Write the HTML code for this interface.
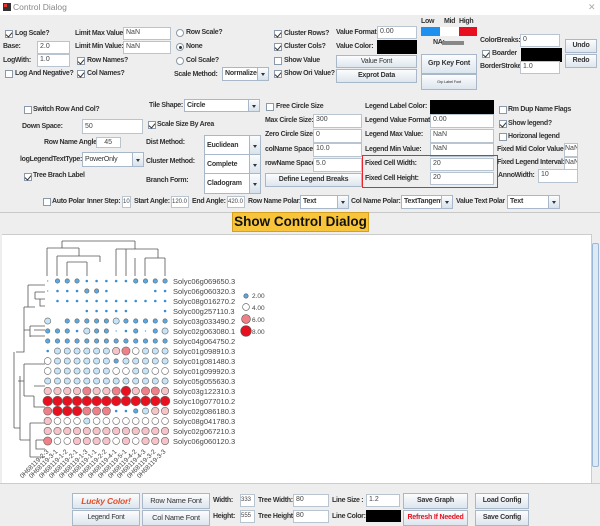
<!DOCTYPE html>
<html><head><meta charset="utf-8"><style>
*{box-sizing:border-box;margin:0;padding:0}
body{width:600px;height:519px;overflow:hidden;background:#eeeeee;font-family:"Liberation Sans",Arial,sans-serif;position:relative;font-size:8px;color:#333}
div,span{position:absolute}
.l{font-weight:bold;font-size:7px;letter-spacing:-0.3px;white-space:nowrap;line-height:10px}
.i{background:#fff;border:1px solid #b8c4d0;font-size:7px;line-height:10px;padding-left:2px;white-space:nowrap;overflow:hidden;color:#444}
.cb{width:8px;height:8px;border:1px solid #8a9aaa;background:#fff}
.cb.c::after{content:"";position:absolute;left:1px;top:0px;width:3px;height:5px;border:solid #333;border-width:0 1.5px 1.5px 0;transform:rotate(40deg)}
.rd{width:8px;height:8px;border:1px solid #8a9aaa;border-radius:50%;background:#fff}
.rd.c::after{content:"";position:absolute;left:1.5px;top:1.5px;width:3px;height:3px;border-radius:50%;background:#333}
.b{background:linear-gradient(#fbfcfd,#dde6ee);border:1px solid #a8b8c8;font-size:7px;font-weight:bold;text-align:center;white-space:nowrap;color:#333;letter-spacing:-0.2px}
.cmb{background:#fff;border:1px solid #a8b8c8;font-size:7px;font-weight:bold;padding-left:2px;white-space:nowrap;color:#333;overflow:hidden;letter-spacing:-0.2px}
.cmb::after{content:"";position:absolute;right:0;top:0;bottom:0;width:10px;border-left:1px solid #a8b8c8;background:linear-gradient(#fbfcfd,#d8e2ec)}
.cmb i{position:absolute;right:3px;top:50%;margin-top:-1px;border:2px solid transparent;border-top:3px solid #333;z-index:2}
.k{background:#000}
</style></head><body>
<div style="left:0;top:0;width:600px;height:15px;background:#fff"></div>
<div style="left:3px;top:3px;width:8px;height:8px;background:#333"></div>
<div style="left:4px;top:4px;width:3px;height:3px;background:#e33"></div>
<div style="left:13px;top:2px;font-size:8.5px;color:#888">Control Dialog</div>
<div style="top:2px;font-size:9px;color:#aaa;left:588px">✕</div>

<div class="cb c" style="left:5px;top:30px"></div><div class="l" style="left:15px;top:29px">Log Scale?</div>
<div class="l" style="left:75px;top:29px">Limit Max Value:</div><div class="i" style="left:123px;top:27px;width:48px;height:13px">NaN</div>
<div class="rd" style="left:176px;top:29px"></div><div class="l" style="left:186px;top:28px">Row Scale?</div>
<div class="cb c" style="left:274px;top:30px"></div><div class="l" style="left:284px;top:29px">Cluster Rows?</div>
<div class="l" style="left:336px;top:28px">Value Format:</div><div class="i" style="left:377px;top:26px;width:40px;height:13px">0.00</div>
<div class="l" style="left:421px;top:17px">Low</div><div class="l" style="left:444px;top:17px">Mid</div><div class="l" style="left:459px;top:17px">High</div>
<div style="left:421px;top:27px;width:19px;height:9px;background:#1e90f0"></div><div style="left:440px;top:27px;width:19px;height:9px;background:#fff"></div><div style="left:459px;top:27px;width:18px;height:9px;background:#e8101e"></div>

<div class="l" style="left:3px;top:42px">Base:</div><div class="i" style="left:37px;top:41px;width:33px;height:13px">2.0</div>
<div class="l" style="left:75px;top:42px">Limit Min Value:</div><div class="i" style="left:123px;top:41px;width:48px;height:13px">NaN</div>
<div class="rd c" style="left:176px;top:43px"></div><div class="l" style="left:186px;top:42px">None</div>
<div class="cb c" style="left:274px;top:43px"></div><div class="l" style="left:284px;top:42px">Cluster Cols?</div>
<div class="l" style="left:336px;top:42px">Value Color:</div><div class="k" style="left:377px;top:40px;width:40px;height:14px"></div>
<div class="l" style="left:433px;top:38px">NA:</div><div style="left:442px;top:41px;width:22px;height:4px;background:#888"></div>
<div class="l" style="left:480px;top:36px">ColorBreaks:</div><div class="i" style="left:520px;top:34px;width:40px;height:13px">0</div>
<div class="b" style="left:565px;top:39px;width:32px;height:14px;line-height:12px">Undo</div>

<div class="l" style="left:3px;top:56px">LogWith:</div><div class="i" style="left:37px;top:54px;width:33px;height:13px">1.0</div>
<div class="cb c" style="left:77px;top:57px"></div><div class="l" style="left:87px;top:56px">Row Names?</div>
<div class="rd" style="left:176px;top:57px"></div><div class="l" style="left:186px;top:56px">Col Scale?</div>
<div class="cb" style="left:274px;top:57px"></div><div class="l" style="left:284px;top:56px">Show Value</div>
<div class="b" style="left:336px;top:55px;width:81px;height:13px;line-height:11px;font-weight:normal">Value Font</div>
<div class="b" style="left:421px;top:54px;width:56px;height:20px;line-height:18px">Grp Key Font</div>
<div class="cb c" style="left:482px;top:50px"></div><div class="l" style="left:492px;top:49px">Boarder</div>
<div class="k" style="left:521px;top:48px;width:41px;height:14px"></div>
<div class="b" style="left:565px;top:54px;width:32px;height:14px;line-height:12px">Redo</div>

<div class="cb" style="left:5px;top:70px"></div><div class="l" style="left:15px;top:69px">Log And Negative?</div>
<div class="cb c" style="left:77px;top:70px"></div><div class="l" style="left:87px;top:69px">Col Names?</div>
<div class="l" style="left:174px;top:70px">Scale Method:</div><div class="cmb" style="left:222px;top:67px;width:47px;height:14px;line-height:12px">Normalized<i></i></div>
<div class="cb c" style="left:274px;top:70px"></div><div class="l" style="left:284px;top:69px">Show Ori Value?</div>
<div class="b" style="left:336px;top:69px;width:81px;height:14px;line-height:12px">Exprot Data</div>
<div class="l" style="left:480px;top:62px">BorderStroke:</div><div class="i" style="left:520px;top:61px;width:40px;height:13px">1.0</div>
<div class="b" style="left:421px;top:74px;width:56px;height:16px;line-height:14px;font-size:4px;font-weight:normal">Grp Label Font</div>

<div class="cb" style="left:24px;top:106px"></div><div class="l" style="left:33px;top:105px">Switch Row And Col?</div>
<div class="l" style="left:149px;top:101px">Tile Shape:</div><div class="cmb" style="left:184px;top:99px;width:76px;height:13px;line-height:11px">Circle<i></i></div>
<div class="cb" style="left:266px;top:103px"></div><div class="l" style="left:276px;top:102px">Free Circle Size</div>
<div class="l" style="left:22px;top:122px">Down Space:</div><div class="i" style="left:82px;top:119px;width:61px;height:15px;line-height:13px">50</div>
<div class="cb c" style="left:148px;top:121px"></div><div class="l" style="left:157px;top:120px">Scale Size By Area</div>
<div class="l" style="left:44px;top:138px">Row Name Angle:</div><div class="i" style="left:96px;top:137px;width:25px;height:11px;line-height:9px;text-align:right;padding-right:8px">45</div>
<div class="l" style="left:146px;top:138px">Dist Method:</div><div class="cmb" style="left:204px;top:135px;width:57px;height:21px;line-height:19px">Euclidean<i></i></div>
<div class="l" style="left:20px;top:155px">logLegendTextType:</div><div class="cmb" style="left:82px;top:152px;width:62px;height:15px;line-height:13px;font-weight:normal">PowerOnly<i></i></div>
<div class="l" style="left:146px;top:157px">Cluster Method:</div><div class="cmb" style="left:204px;top:154px;width:57px;height:21px;line-height:19px">Complete<i></i></div>
<div class="cb c" style="left:24px;top:173px"></div><div class="l" style="left:33px;top:171px">Tree Brach Label</div>
<div class="l" style="left:146px;top:176px">Branch Form:</div><div class="cmb" style="left:204px;top:173px;width:57px;height:21px;line-height:19px">Cladogram<i></i></div>

<div class="l" style="left:265px;top:116px">Max Circle Size:</div><div class="i" style="left:313px;top:114px;width:49px;height:14px">300</div>
<div class="l" style="left:265px;top:130px">Zero Circle Size:</div><div class="i" style="left:313px;top:129px;width:49px;height:14px">0</div>
<div class="l" style="left:265px;top:145px">colName Space:</div><div class="i" style="left:313px;top:143px;width:49px;height:14px">10.0</div>
<div class="l" style="left:265px;top:159px">rowName Space:</div><div class="i" style="left:313px;top:158px;width:49px;height:14px">5.0</div>
<div class="b" style="left:265px;top:173px;width:97px;height:14px;line-height:12px">Define Legend Breaks</div>

<div class="l" style="left:365px;top:102px">Legend Label Color:</div><div class="k" style="left:430px;top:100px;width:64px;height:14px"></div>
<div class="l" style="left:365px;top:116px">Legend Value Format:</div><div class="i" style="left:430px;top:114px;width:64px;height:14px">0.00</div>
<div class="l" style="left:365px;top:130px">Legend Max Value:</div><div class="i" style="left:430px;top:129px;width:64px;height:14px">NaN</div>
<div class="l" style="left:365px;top:145px">Legend Min Value:</div><div class="i" style="left:430px;top:143px;width:64px;height:14px">NaN</div>
<div class="l" style="left:365px;top:159px">Fixed Cell Width:</div><div class="i" style="left:430px;top:158px;width:64px;height:13px">20</div>
<div class="l" style="left:365px;top:174px">Fixed Cell Height:</div><div class="i" style="left:430px;top:172px;width:64px;height:13px">20</div>
<div style="left:362px;top:155px;width:136px;height:33px;border:1.5px solid #e8262e"></div>

<div class="cb" style="left:499px;top:106px"></div><div class="l" style="left:508px;top:105px">Rm Dup Name Flags</div>
<div class="cb c" style="left:499px;top:120px"></div><div class="l" style="left:508px;top:119px">Show legend?</div>
<div class="cb" style="left:499px;top:133px"></div><div class="l" style="left:508px;top:132px">Horizonal legend</div>
<div class="l" style="left:497px;top:145px">Fixed Mid Color Value:</div><div class="i" style="left:564px;top:143px;width:14px;height:14px;padding:0">NaN</div>
<div class="l" style="left:497px;top:158px">Fixed Legend Interval:</div><div class="i" style="left:564px;top:157px;width:14px;height:14px;padding:0">NaN</div>
<div class="l" style="left:498px;top:171px">AnnoWidth:</div><div class="i" style="left:538px;top:169px;width:40px;height:14px">10</div>

<div class="cb" style="left:43px;top:198px"></div><div class="l" style="left:52px;top:197px">Auto Polar</div>
<div class="l" style="left:87px;top:197px">Inner Step:</div><div class="i" style="left:122px;top:196px;width:9px;height:12px;padding:0;font-size:6px">10</div>
<div class="l" style="left:134px;top:197px">Start Angle:</div><div class="i" style="left:171px;top:196px;width:18px;height:12px;padding:0;font-size:6px">120.0</div>
<div class="l" style="left:192px;top:197px">End Angle:</div><div class="i" style="left:227px;top:196px;width:18px;height:12px;padding:0;font-size:6px">420.0</div>
<div class="l" style="left:248px;top:197px">Row Name Polar:</div><div class="cmb" style="left:300px;top:195px;width:49px;height:14px;line-height:12px">Text<i></i></div>
<div class="l" style="left:351px;top:197px">Col Name Polar:</div><div class="cmb" style="left:401px;top:195px;width:52px;height:14px;line-height:12px">TextTangent<i></i></div>
<div class="l" style="left:456px;top:197px">Value Text Polar</div><div class="cmb" style="left:507px;top:195px;width:53px;height:14px;line-height:12px">Text<i></i></div>
<div style="left:0;top:212px;width:600px;height:1px;background:#c8c8c8"></div>
<div style="left:232px;top:212px;width:137px;height:20px;background:#f8c53a;border:1px solid #d4a020;font-size:13.5px;font-weight:bold;color:#111;text-align:center;line-height:18px;white-space:nowrap">Show Control Dialog</div>

<div style="left:2px;top:234px;width:590px;height:249px;background:#fff;border-top:1px solid #ccc"></div>
<div style="left:591px;top:234px;width:9px;height:249px;background:#eee;border-left:1px solid #ccc"></div>
<div style="left:592px;top:243px;width:7px;height:224px;background:#dde9f5;border:1px solid #9bb8d8;border-radius:2px"></div>
<svg style="position:absolute;left:0;top:0" width="600" height="519">
<g stroke="#555" stroke-width="0.8" fill="none">
<path d="M62 241H135M62 241V248M135 241V249M47 248H79M47 248V276M79 248V256M57 256H100M57 256V276M100 256V262M67 262H87M67 262V276M87 262V276M57 262V276M116 249H158M116 249V276M126 249V276M158 249V258M145 258H165M145 258V276M165 258V276M135 258V276"/>
<path d="M28 285H45M28 285V307M28 307H35M35 292H45M35 292V299M35 299H45M40 299V306H45M24 307V352H16M24 307H28M30 326H45M30 326V337M30 336H45M24 330H30M34 330H45M14 352V428M14 428H20M18 381H24M24 364V396M24 364H45M24 396H34M34 386H45M34 396V407H45M20 376V440M20 440H30M30 423H45M30 423V457M30 457H45M36 440H45M36 440V449H45"/>
</g>
<g font-size="7.5" fill="#444" font-family="Liberation Sans,sans-serif">
<text x="173" y="284">Solyc06g069650.3</text><text x="173" y="294">Solyc06g060320.3</text><text x="173" y="304">Solyc08g016270.2</text><text x="173" y="314">Solyc00g257110.3</text><text x="173" y="324">Solyc03g033490.2</text><text x="173" y="334">Solyc02g063080.1</text><text x="173" y="344">Solyc04g064750.2</text><text x="173" y="354">Solyc01g098910.3</text><text x="173" y="364">Solyc01g081480.3</text><text x="173" y="374">Solyc01g099920.3</text><text x="173" y="384">Solyc05g055630.3</text><text x="173" y="394">Solyc03g122310.3</text><text x="173" y="404">Solyc10g077010.2</text><text x="173" y="414">Solyc02g086180.3</text><text x="173" y="424">Solyc08g041780.3</text><text x="173" y="434">Solyc02g067210.3</text><text x="173" y="444">Solyc06g060120.3</text>
<text x="252" y="298" font-size="6.5">2.00</text><text x="252" y="310" font-size="6.5">4.00</text><text x="252" y="322" font-size="6.5">6.00</text><text x="252" y="334" font-size="6.5">8.00</text>
</g>
<g font-size="6.5" fill="#444" font-family="Liberation Sans,sans-serif" text-anchor="end">
<text transform="translate(49,452) rotate(-45)">0H68119-2-3</text><text transform="translate(58,452) rotate(-45)">0H68119-3-1</text><text transform="translate(68,452) rotate(-45)">0H68119-1-2</text><text transform="translate(78,452) rotate(-45)">0H68119-2-1</text><text transform="translate(88,452) rotate(-45)">0H68119-1-3</text><text transform="translate(97,452) rotate(-45)">0H68119-1-1</text><text transform="translate(107,452) rotate(-45)">0H68119-2-2</text><text transform="translate(117,452) rotate(-45)">0H68119-4-1</text><text transform="translate(127,452) rotate(-45)">0H68119-5-1</text><text transform="translate(137,452) rotate(-45)">0H68119-4-2</text><text transform="translate(146,452) rotate(-45)">0H68119-4-3</text><text transform="translate(156,452) rotate(-45)">0H68119-3-2</text><text transform="translate(166,452) rotate(-45)">0H68119-3-3</text>
</g>
<g stroke="#555" stroke-width="0.6">
<circle cx="246" cy="296" r="2.2" fill="#5aa9e0"/><circle cx="246" cy="307" r="3.4" fill="#fff"/><circle cx="246" cy="319" r="4.4" fill="#f08088"/><circle cx="246" cy="331" r="5.3" fill="#e8101e"/>
</g>
<g id="cells" stroke="#666" stroke-width="0.6"></g>
</svg>
<script>
var rows=["0bbbsssssbbbb","0sssbbs----ss","-ssssssssssss","----sssss---s","B-bbbbbBbbbbb","bbbsBbb0sb0bB","bbbbbbbbbbbbb","sBBBBBBpPwBBB","wBBBBBBbBBBBB","wBBBBBBwwBBww","BBBBBBBBBBBBB","ppppPppPRpPPp","RRRRRRRRRRRRR","PRRRPPPssbBpp","pwwwBwwwwwwww","ppppppppppppp","Pwwppppwpwppp"];
var st={"0":[0.7,"#5aa9e0"],"s":[1.3,"#3a8ed0"],"b":[2.2,"#5aa9e0"],"B":[3.1,"#c6e4f8"],"w":[3.4,"#ffffff"],"p":[3.7,"#f6c4c8"],"P":[4.1,"#f08088"],"R":[4.8,"#e8101e"]};
var g=document.getElementById("cells"),h="";
rows.forEach(function(r,i){for(var j=0;j<13;j++){var c=r[j];if(c=="-")continue;var s=st[c];h+='<circle cx="'+(47.7+9.78*j)+'" cy="'+(281+10*i)+'" r="'+s[0]+'" fill="'+s[1]+'"'+(c=="0"||c=="s"?' stroke="none"':'')+'/>';}});
g.innerHTML=h;
</script>

<div style="left:0;top:483px;width:600px;height:1px;background:#ccc"></div>
<div class="b" style="left:72px;top:493px;width:68px;height:16px;line-height:14px;color:#e0502a;font-style:italic;font-size:8.5px">Lucky Color!</div>
<div class="b" style="left:72px;top:510px;width:68px;height:16px;line-height:14px;font-weight:normal">Legend Font</div>
<div class="b" style="left:142px;top:493px;width:68px;height:16px;line-height:14px;font-weight:normal;font-size:7.5px">Row Name Font</div>
<div class="b" style="left:142px;top:510px;width:68px;height:16px;line-height:14px;font-weight:normal;font-size:7.5px">Col Name Font</div>
<div class="l" style="left:213px;top:496px">Width:</div><div class="i" style="left:240px;top:494px;width:15px;height:13px;padding:0;font-size:6px">333</div>
<div class="l" style="left:213px;top:512px">Height:</div><div class="i" style="left:240px;top:510px;width:15px;height:13px;padding:0;font-size:6px">555</div>
<div class="l" style="left:258px;top:496px">Tree Width:</div><div class="i" style="left:293px;top:494px;width:36px;height:13px">80</div>
<div class="l" style="left:258px;top:512px">Tree Height:</div><div class="i" style="left:293px;top:510px;width:36px;height:13px">80</div>
<div class="l" style="left:332px;top:496px">Line Size :</div><div class="i" style="left:366px;top:494px;width:34px;height:13px">1.2</div>
<div class="l" style="left:332px;top:512px">Line Color:</div><div class="k" style="left:366px;top:510px;width:35px;height:12px"></div>
<div class="b" style="left:403px;top:493px;width:65px;height:16px;line-height:14px">Save Graph</div>
<div class="b" style="left:403px;top:510px;width:65px;height:16px;line-height:14px;color:#e8101e">Refresh If Needed</div>
<div class="b" style="left:475px;top:493px;width:54px;height:16px;line-height:14px">Load Config</div>
<div class="b" style="left:475px;top:510px;width:54px;height:16px;line-height:14px">Save Config</div>
</body></html>
